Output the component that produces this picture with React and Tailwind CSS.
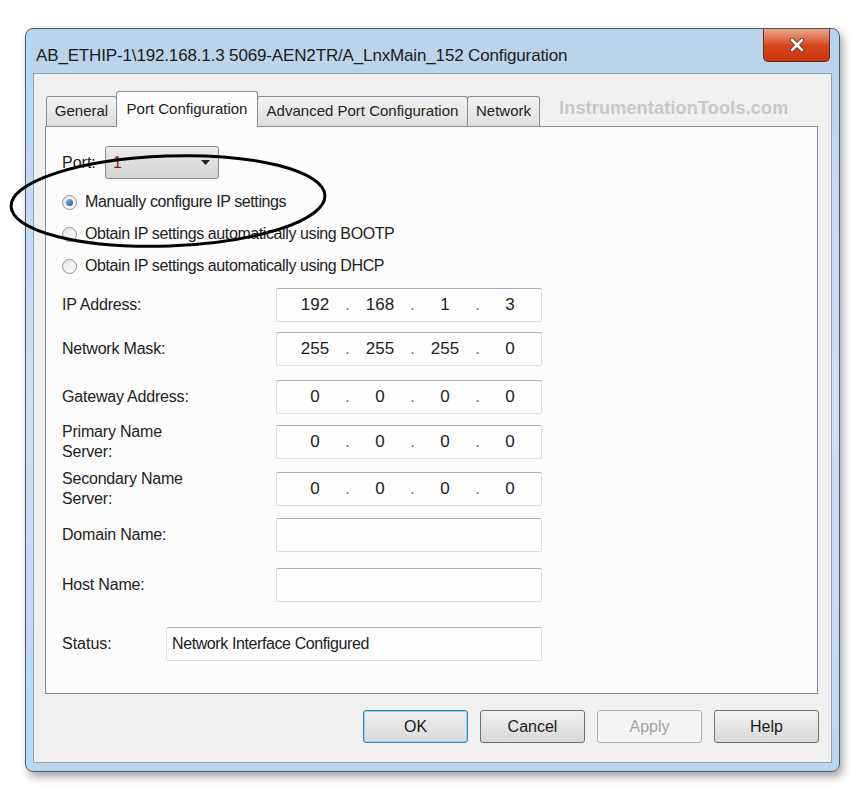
import React from 'react';

const rows = [
  { label: 'IP Address:', octets: ['192', '168', '1', '3'], mt: 'mt-[6px]' },
  { label: 'Network Mask:', octets: ['255', '255', '255', '0'], mt: 'mt-[10px]' },
  { label: 'Gateway Address:', octets: ['0', '0', '0', '0'], mt: 'mt-[14px]' },
  { label: 'Primary Name\nServer:', octets: ['0', '0', '0', '0'], mt: 'mt-[11px]' },
  { label: 'Secondary Name\nServer:', octets: ['0', '0', '0', '0'], mt: 'mt-[13px]' },
  { label: 'Domain Name:', mt: 'mt-[12px]' },
  { label: 'Host Name:', mt: 'mt-[16px]' },
];

const radios = [
  { text: 'Manually configure IP settings', on: true },
  { text: 'Obtain IP settings automatically using BOOTP' },
  { text: 'Obtain IP settings automatically using DHCP' },
];

const Field = ({ children, className = '' }) => (
  <div className={`h-[34px] bg-[#fdfdfd] border border-[#dcdfe3] border-t-[#abadb3] rounded-[2px] flex items-center ${className}`}>
    {children}
  </div>
);

const Radio = ({ on }) => (
  <span className="w-[15px] h-[15px] rounded-full border border-[#8e8f8f] bg-gradient-to-br from-[#e6e6e6] to-[#fbfbfb] flex items-center justify-center shrink-0">
    {on && <span className="w-[7px] h-[7px] rounded-full bg-gradient-to-br from-[#84c3f0] to-[#1b5b9e]" />}
  </span>
);

const Btn = ({ children, focus, disabled }) => (
  <button
    className={`w-[105px] h-[33px] rounded-[3px] border text-[16px] ${
      focus
        ? 'border-[#3c7fb1] shadow-[inset_0_0_0_1px_#8fd2f7] bg-gradient-to-b from-[#f0f0f0] to-[#d9d9d9] text-[#1a1a1a]'
        : disabled
        ? 'border-[#adb2b5] bg-[#f4f4f4] text-[#a3a3a3]'
        : 'border-[#707070] bg-gradient-to-b from-[#f2f2f2] to-[#d8d8d8] text-[#1a1a1a]'
    }`}
  >
    {children}
  </button>
);

export default function App() {
  return (
    <div className="w-[860px] h-[789px] bg-white relative overflow-hidden font-['Liberation_Sans',Arial,sans-serif] text-[#222]">
      <div className="pt-[28px] pl-[25px]">
        <div className="w-[815px] h-[744px] rounded-[8px] border border-[#4d5a66] bg-gradient-to-b from-[#b9d3ec] via-[#cfe2f4] to-[#bcd6ee] shadow-[3px_5px_8px_rgba(0,0,0,0.35)] flex flex-col px-[7px] pb-[8px]">
          {/* title bar */}
          <div className="h-[44px] flex items-start justify-between shrink-0">
            <div className="pt-[14px] pl-[3px] text-[17px] tracking-[-0.15px] text-[#1b1b1b]">
              AB_ETHIP-1\192.168.1.3 5069-AEN2TR/A_LnxMain_152 Configuration
            </div>
            <div className="mr-[2px] w-[67px] h-[33px] rounded-b-[5px] border border-t-0 border-[#6b2c1e] bg-gradient-to-b from-[#e9a58a] via-[#d8481e] to-[#c7340c] flex items-center justify-center">
              <svg width="16" height="14" viewBox="0 0 16 14">
                <path d="M3 2 L13 12 M13 2 L3 12" stroke="#6b2c1e" strokeWidth="4.5" strokeLinecap="round" />
                <path d="M3 2 L13 12 M13 2 L3 12" stroke="#ffffff" strokeWidth="2.6" strokeLinecap="round" />
              </svg>
            </div>
          </div>

          {/* client area */}
          <div className="flex-1 bg-[#f0f0f0] border border-[#8ea4ba] flex flex-col">
            {/* tabs */}
            <div className="h-[52px] flex items-end pl-[12px] shrink-0">
              <div className="w-[71px] h-[30px] border border-b-0 border-[#898c95] rounded-t-[3px] bg-gradient-to-b from-[#f4f4f4] to-[#dedede] flex items-center justify-center text-[15px]">
                General
              </div>
              <div className="relative z-10 -mb-px -ml-px w-[142px] h-[36px] border border-b-0 border-[#898c95] rounded-t-[3px] bg-[#fcfcfc] flex items-start pt-[6px] justify-center text-[15px]">
                Port Configuration
              </div>
              <div className="-ml-px w-[211px] h-[30px] border border-b-0 border-[#898c95] rounded-t-[3px] bg-gradient-to-b from-[#f4f4f4] to-[#dedede] flex items-center justify-center text-[15px]">
                Advanced Port Configuration
              </div>
              <div className="-ml-px w-[73px] h-[30px] border border-b-0 border-[#898c95] rounded-t-[3px] bg-gradient-to-b from-[#f4f4f4] to-[#dedede] flex items-center justify-center text-[15px]">
                Network
              </div>
              <div className="self-start mt-[21px] ml-[19px] font-bold text-[18px] text-[#c8c8c8] tracking-[0.2px]">
                InstrumentationTools.com
              </div>
            </div>

            {/* tab panel */}
            <div className="ml-[11px] w-[773px] h-[568px] shrink-0 border border-[#898c95] bg-[#fcfcfc] pl-[16px] flex flex-col">
              <div className="mt-[19px] h-[33px] flex items-center">
                <span className="w-[43px] text-[16px]">Port:</span>
                <div className="w-[114px] h-[33px] rounded-[3px] border border-[#8a8a8a] bg-gradient-to-b from-[#ececec] to-[#d2d2d2] flex items-center pl-[7px] pr-[8px] justify-between">
                  <span className="text-[16px] text-[#8a1c1c]">1</span>
                  <svg width="9" height="5" viewBox="0 0 9 5"><path d="M0 0 H9 L4.5 5 Z" fill="#222" /></svg>
                </div>
              </div>

              <div className="mt-[7px] flex flex-col">
                {radios.map((r) => (
                  <div key={r.text} className="h-[32px] flex items-center gap-[8px] text-[16px] tracking-[-0.4px]">
                    <Radio on={r.on} />
                    <span>{r.text}</span>
                  </div>
                ))}
              </div>

              {rows.map((r) => (
                <div key={r.label} className={`${r.mt} h-[34px] flex items-center`}>
                  <span className="w-[214px] h-[34px] flex items-center text-[16px] leading-[20px] whitespace-pre-line tracking-[-0.2px]">{r.label}</span>
                  <Field className="w-[266px] pl-[12px]">
                    {r.octets &&
                      r.octets.map((o, i) => (
                        <React.Fragment key={i}>
                          {i > 0 && <span className="w-[13px] text-center text-[#666] text-[16px]">.</span>}
                          <span className="w-[52px] text-center text-[17px]">{o}</span>
                        </React.Fragment>
                      ))}
                  </Field>
                </div>
              ))}

              <div className="mt-[25px] flex items-center">
                <span className="w-[104px] text-[16px]">Status:</span>
                <Field className="w-[376px] pl-[5px] text-[16px] tracking-[-0.4px]">Network Interface Configured</Field>
              </div>
            </div>

            {/* buttons */}
            <div className="flex-1 flex items-start justify-end gap-[12px] pt-[16px] pr-[12px]">
              <Btn focus>OK</Btn>
              <Btn>Cancel</Btn>
              <Btn disabled>Apply</Btn>
              <Btn>Help</Btn>
            </div>
          </div>
        </div>
      </div>

      {/* hand-drawn highlight ellipse */}
      <svg className="absolute left-0 top-0 pointer-events-none" width="860" height="789">
        <ellipse cx="168" cy="201" rx="157" ry="45" transform="rotate(-2 168 201)" fill="none" stroke="#000" strokeWidth="3" />
      </svg>
    </div>
  );
}
